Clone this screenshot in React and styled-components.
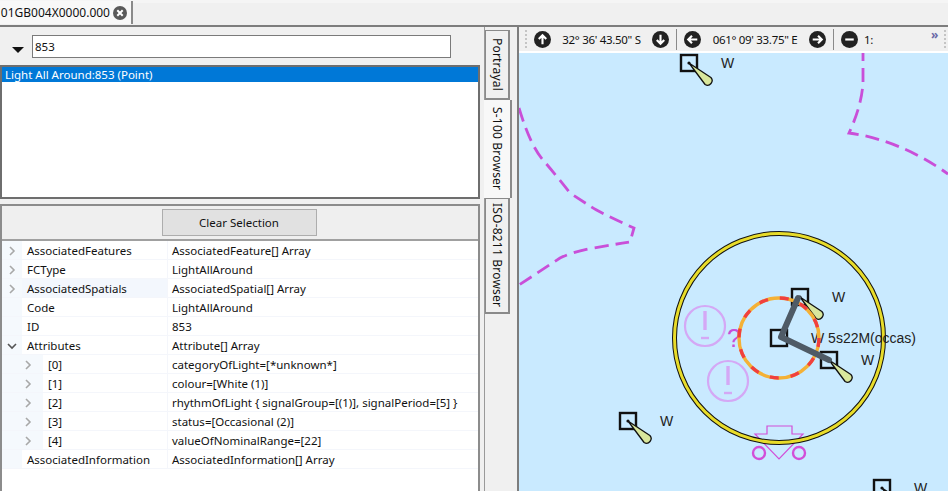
import styled, { createGlobalStyle } from 'styled-components'

const GlobalStyle = createGlobalStyle`
  html, body {
    margin: 0;
    padding: 0;
    width: 948px;
    height: 491px;
    overflow: hidden;
    background: #f0f0f0;
    font-family: "Noto Sans", "Liberation Sans", sans-serif;
    font-size: 11.5px;
    color: #111;
  }
  * { box-sizing: border-box; }
`
const Page = styled.div`
  width: 948px;
  height: 491px;
  display: flex;
  flex-direction: column;
  overflow: hidden;
`
const TabBar = styled.div`
  height: 27px;
  flex: none;
  display: flex;
  align-items: flex-end;
  padding-bottom: 1px;
  background: #f0f0f0;
  border-top: 3px solid #f5f5f5;
  border-bottom: 2px solid #7d7d7d;
`
const FileTab = styled.div`
  width: 133px;
  height: 23px;
  display: flex;
  align-items: center;
  justify-content: flex-end;
  gap: 3px;
  padding-right: 4px;
  overflow: hidden;
  white-space: nowrap;
  font-size: 12px;
  background: #f8f8f8;
  border-right: 2px solid #8a8a8a;
  svg { flex: none; }
`
const Body = styled.div`
  flex: 1;
  min-height: 0;
  display: flex;
`
const LeftPane = styled.div`
  width: 480px;
  flex: none;
  display: flex;
  flex-direction: column;
`
const SearchRow = styled.div`
  height: 38px;
  flex: none;
  display: flex;
  align-items: center;
  padding-left: 12px;
  gap: 8px;
  padding-right: 29px;
  svg { margin-top: 7px; }
`
const SearchInput = styled.div`
  flex: 1;
  height: 23px;
  display: flex;
  align-items: center;
  padding-left: 2px;
  background: #fff;
  border: 1px solid #7a7a7a;
  font-size: 11.5px;
`
const ResultList = styled.div`
  height: 134px;
  flex: none;
  background: #fff;
  border: 2px solid #6e6e6e;
`
const ResultRow = styled.div`
  height: 15px;
  display: flex;
  align-items: center;
  padding-left: 3px;
  color: #fff;
  background: #0078d7;
`
const Inspector = styled.div`
  margin-top: 5px;
  flex: 1;
  min-height: 0;
  display: flex;
  flex-direction: column;
  border: solid #8c8c8c;
  border-width: 2px 2px 0 2px;
`
const ButtonRow = styled.div`
  height: 35px;
  flex: none;
  display: flex;
  justify-content: center;
  padding-top: 3px;
  padding-right: 2px;
  background: #efefef;
  border-bottom: 2px solid #a0a0a0;
`
const ClearButton = styled.div`
  width: 155px;
  height: 27px;
  display: flex;
  align-items: center;
  justify-content: center;
  background: #e1e1e1;
  border: 1px solid #adadad;
`
const Tree = styled.div`
  flex: 1;
  background: #fff;
`
const TreeRow = styled.div`
  height: 19px;
  display: grid;
  grid-template-columns: 20px 146px 1fr;
  border-bottom: 1px solid #f4f6fb;
`
const Gutter = styled.div`
  display: flex;
  align-items: center;
  padding-left: ${(props) => (props.$child ? 21 : 0)}px;
  width: ${(props) => (props.$child ? 41 : 20)}px;
  background: #f5f9fd;
  justify-content: ${(props) => (props.$child ? 'flex-start' : 'center')};
  padding-top: 1px;
`
const NameCell = styled.div`
  display: flex;
  align-items: center;
  padding-left: ${(props) => (props.$child ? 26 : 5)}px;
  background: ${(props) => (props.$hover ? '#f3f7fd' : 'transparent')};
  border-right: 1px solid #f4f6fb;
  white-space: nowrap;
`
const ValueCell = styled.div`
  display: flex;
  align-items: center;
  padding-left: 4px;
  white-space: nowrap;
`
const SideTabs = styled.div`
  width: 35px;
  flex: none;
  display: flex;
  flex-direction: column;
  padding-top: 3px;
  border-right: 2px solid #7d7d7d;
  border-left: 1px solid #9a9a9a;
  margin-left: 4px;
  background: #f0f0f0;
`
const SideTab = styled.div`
  width: ${(props) => (props.$active ? 28 : 25)}px;
  height: ${(props) => props.$height}px;
  margin-left: ${(props) => (props.$active ? -1 : 0)}px;
  display: flex;
  align-items: center;
  justify-content: center;
  writing-mode: vertical-rl;
  font-size: 12px;
  letter-spacing: 0.2px;
  background: ${(props) => (props.$active ? '#f8f8f8' : '#f0f0f0')};
  border: solid #8a8a8a;
  border-width: ${(props) => (props.$active ? '0 2px 0 0' : '1px 2px 2px 1px')};
`
const MapPane = styled.div`
  flex: 1;
  min-width: 0;
  display: flex;
  flex-direction: column;
`
const MapToolbar = styled.div`
  height: 26px;
  flex: none;
  display: flex;
  align-items: center;
  padding-left: 15px;
  background: #f0f0f0;
  border-bottom: 2px solid #fff;
  position: relative;
  font-size: 11.5px;
  letter-spacing: -0.3px;
  white-space: nowrap;
`
const Coord = styled.span`
  width: ${(props) => props.$width}px;
  text-align: ${(props) => (props.$left ? 'left' : 'center')};
  padding-left: ${(props) => (props.$left ? 6 : 0)}px;
`
const Divider = styled.span`
  width: 1px;
  height: 21px;
  margin: 0 7px;
  background: #8a8a8a;
`
const Overflow = styled.span`
  position: absolute;
  right: 10px;
  top: -1px;
  font-size: 12px;
  font-weight: 700;
  color: #6a6aa8;
`
const Grip = styled.span`
  position: absolute;
  top: 3px;
  left: ${(props) => props.$left}px;
  width: 2px;
  height: 18px;
  border-left: 2px dotted #c4c4c4;
`
const Chart = styled.svg`
  display: block;
  flex: 1;
  min-height: 0;
  width: 100%;
  background: #c9eaff;
`
const ChartLabel = styled.text`
  font-family: "Liberation Sans", sans-serif;
  font-size: 14px;
  fill: #222;
`

function Chevron({ open }) {
  return (
    <svg width="10" height="10" viewBox="0 0 10 10">
      <path
        d={open ? 'M1 3l4 4 4-4' : 'M3 1l4 4-4 4'}
        fill="none"
        stroke={open ? '#555' : '#a8a8a8'}
        strokeWidth="1.6"
      />
    </svg>
  )
}

function RoundButton({ d }) {
  return (
    <svg width="17" height="17" viewBox="0 0 16 16">
      <circle cx="8" cy="8" r="8" fill="#222" />
      <path d={d} fill="none" stroke="#fff" strokeWidth="2" />
    </svg>
  )
}

function Light({ x, y, label, labelX }) {
  return (
    <g>
      <rect x={x - 8} y={y - 8} width="16" height="16" fill="none" stroke="#111" strokeWidth="2.4" />
      <path
        d={`M${x} ${y} L${x + 21.9} ${y + 14.5} a4.6 4.6 0 0 1 -5.8 7 Z`}
        fill="#d9e79c"
        stroke="#111"
        strokeWidth="1.3"
        strokeLinejoin="round"
      />
      <circle cx={x} cy={y} r="1.6" fill="#111" />
      <ChartLabel x={labelX} y={y + 5}>{label}</ChartLabel>
    </g>
  )
}

function Caution({ x, y }) {
  return (
    <g fill="none" stroke="#d4a8f5">
      <circle cx={x} cy={y} r="20" strokeWidth="2.2" />
      <path d={`M${x} ${y - 15} V${y + 4}`} strokeWidth="3.4" />
      <path d={`M${x - 4} ${y + 12} H${x + 4}`} strokeWidth="2.4" />
    </g>
  )
}

const treeRows = [
  { name: 'AssociatedFeatures', value: 'AssociatedFeature[] Array', arrow: true },
  { name: 'FCType', value: 'LightAllAround', arrow: true },
  { name: 'AssociatedSpatials', value: 'AssociatedSpatial[] Array', arrow: true, hover: true },
  { name: 'Code', value: 'LightAllAround' },
  { name: 'ID', value: '853' },
  { name: 'Attributes', value: 'Attribute[] Array', open: true },
  { name: '[0]', value: 'categoryOfLight=[*unknown*]', child: true },
  { name: '[1]', value: 'colour=[White (1)]', child: true },
  { name: '[2]', value: 'rhythmOfLight { signalGroup=[(1)], signalPeriod=[5] }', child: true },
  { name: '[3]', value: 'status=[Occasional (2)]', child: true },
  { name: '[4]', value: 'valueOfNominalRange=[22]', child: true },
  { name: 'AssociatedInformation', value: 'AssociatedInformation[] Array' },
]

export default function App() {
  return (
    <Page>
      <GlobalStyle />
      <TabBar>
        <FileTab>
          <span>101GB004X0000.000</span>
          <svg width="14" height="14" viewBox="0 0 14 14">
            <circle cx="7" cy="7" r="7" fill="#5a5a5a" />
            <path d="M4.3 4.3l5.4 5.4M9.7 4.3l-5.4 5.4" stroke="#fff" strokeWidth="2" />
          </svg>
        </FileTab>
      </TabBar>
      <Body>
        <LeftPane>
          <SearchRow>
            <svg width="12" height="6" viewBox="0 0 12 6">
              <path d="M0 0h12L6 6z" fill="#111" />
            </svg>
            <SearchInput>853</SearchInput>
          </SearchRow>
          <ResultList>
            <ResultRow>Light All Around:853 (Point)</ResultRow>
          </ResultList>
          <Inspector>
            <ButtonRow>
              <ClearButton>Clear Selection</ClearButton>
            </ButtonRow>
            <Tree>
              {treeRows.map((row) => (
                <TreeRow key={row.name}>
                  <Gutter $child={row.child}>
                    {(row.arrow || row.child) && <Chevron />}
                    {row.open && <Chevron open />}
                  </Gutter>
                  <NameCell $child={row.child} $hover={row.hover}>{row.name}</NameCell>
                  <ValueCell>{row.value}</ValueCell>
                </TreeRow>
              ))}
            </Tree>
          </Inspector>
        </LeftPane>
        <SideTabs>
          <SideTab $height={70}>Portrayal</SideTab>
          <SideTab $height={98} $active>S-100 Browser</SideTab>
          <SideTab $height={116}>ISO-8211 Browser</SideTab>
        </SideTabs>
        <MapPane>
          <MapToolbar>
            <Grip $left={6} />
            <RoundButton d="M8 12.5V4M4.5 7.5L8 4l3.5 3.5" />
            <Coord $width={101}>32° 36' 43.50" S</Coord>
            <RoundButton d="M8 3.5V12M4.5 8.5L8 12l3.5-3.5" />
            <Divider />
            <RoundButton d="M12.5 8H4M7.5 4.5L4 8l3.5 3.5" />
            <Coord $width={108}>061° 09' 33.75" E</Coord>
            <RoundButton d="M3.5 8H12M8.5 4.5L12 8l-3.5 3.5" />
            <Divider />
            <RoundButton d="M4 8h8" />
            <Coord $width={24} $left>1:</Coord>
            <Overflow>»</Overflow>
            <Grip $left={425} />
          </MapToolbar>
          <Chart viewBox="519 53 429 438" preserveAspectRatio="xMinYMin slice">
            <g fill="none" stroke="#c94fd8" strokeWidth="2.8" strokeDasharray="14 7">
              <path d="M519 108 Q530 145 543 160 T570 193 L590 206 Q600 213 634 228 L630 242 Q610 245 588 249 Q570 253 560 258 L519 285" />
              <path d="M863 47 V82 Q862 105 849 133 Q900 140 948 174" />
            </g>
            <g fill="none" stroke="#d24fd8">
              <path d="M767 426H792V434H803L779 459 755 434H767Z" strokeWidth="1.2" />
              <circle cx="759" cy="453" r="6" strokeWidth="2.4" />
              <circle cx="799" cy="453" r="6" strokeWidth="2.4" />
            </g>
            <circle cx="779" cy="338" r="104.5" fill="none" stroke="#111" strokeWidth="5" />
            <circle cx="779" cy="338" r="104.5" fill="none" stroke="#e8dc2a" strokeWidth="3" />
            <Caution x={705} y={326} />
            <Caution x={728} y={381} />
            <text x="727" y="347" fontFamily="Liberation Sans, sans-serif" fontSize="25" fill="#c94fd8">?</text>
            <Light x={689} y={63} label="W" labelX={721} />
            <Light x={800} y={297} label="W" labelX={832} />
            <Light x={829} y={360} label="W" labelX={861} />
            <Light x={628} y={421} label="W" labelX={660} />
            <Light x={882} y={488} label="W" labelX={914} />
            <rect x="771" y="330" width="16" height="16" fill="none" stroke="#111" strokeWidth="2.4" />
            <ChartLabel x="811" y="343">W 5s22M(occas)</ChartLabel>
            <circle cx="779" cy="338" r="40" fill="none" stroke="#f4b136" strokeWidth="3.4" />
            <circle cx="779" cy="338" r="40" fill="none" stroke="#f0403f" strokeWidth="3.4" strokeDasharray="9 12" />
            <path d="M798 298L781 337 829 360" fill="none" stroke="#4f5b66" strokeWidth="6" strokeLinecap="round" strokeLinejoin="round" />
          </Chart>
        </MapPane>
      </Body>
    </Page>
  )
}
